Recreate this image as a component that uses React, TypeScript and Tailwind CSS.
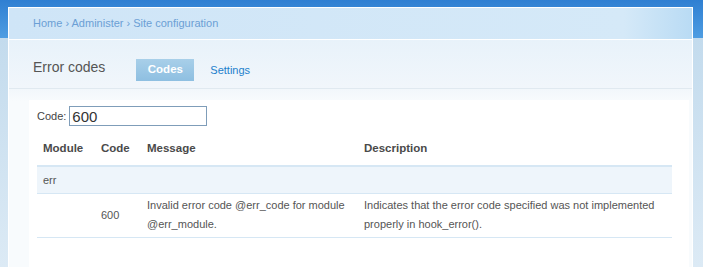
const rows = [
  {
    module: '',
    code: '600',
    message: 'Invalid error code @err_code for module @err_module.',
    description: 'Indicates that the error code specified was not implemented properly in hook_error().',
  },
]

export default function App() {
  return (
    <div className="h-[267px] w-[703px] overflow-hidden bg-[linear-gradient(to_bottom,#2f7fd2_0px,#4e9de2_38px,#c3dbed_38px,#dceaf5_267px)] pl-[8px] pr-[10px] pt-[7px] font-['Liberation_Sans',Arial,sans-serif]">
      <div className="flex h-[260px] flex-col border-l border-r border-t border-white bg-white">
        <div className="flex h-[31px] items-center bg-[linear-gradient(to_right,#cfe5f7_0%,#d5e9f8_90%,#b9dbf4_100%)] pl-[24px] text-[11px] text-[#6b9fd5]">
          Home › Administer › Site configuration
        </div>
        <div className="flex h-[50px] items-end border-b border-t border-b-[#e0e9f0] border-t-white bg-[linear-gradient(to_bottom,#e8f2fa,#f1f6fb)] pb-[7px] pl-[24px]">
          <h1 className="mb-[6px] text-[14px] leading-[16px] text-[#555]">Error codes</h1>
          <span className="ml-[31px] flex h-[22px] w-[58px] items-center justify-center bg-[linear-gradient(to_bottom,#a8cfe9,#8ebfe1)] text-[11.5px] font-bold text-white">
            Codes
          </span>
          <a className="mb-[4px] ml-[16px] text-[11px] leading-[14px] text-[#1c7fcc]">Settings</a>
        </div>
        <div className="flex flex-1 flex-col bg-[linear-gradient(to_bottom,#f2f7fb_0px,#f8fbfd_12px)] pl-[20px] pr-[3px] pt-[11px]">
          <div className="flex-1 bg-white pl-[8px] pt-[6px]">
            <div className="flex items-center">
              <label className="mr-[3px] text-[11px] text-[#444]">Code:</label>
              <input
                defaultValue="600"
                className="h-[20px] w-[138px] border border-[#7f9db9] px-[2px] text-[15px] leading-[18px] text-[#333] outline-none"
              />
            </div>
            <table className="mt-[7px] w-[635px] table-fixed border-collapse text-left text-[11px] text-[#555]">
              <colgroup>
                <col className="w-[58px]" />
                <col className="w-[46px]" />
                <col className="w-[217px]" />
                <col />
              </colgroup>
              <thead>
                <tr className="h-[33px] border-b-2 border-[#d6e7f4] text-[11.5px] font-bold text-[#4a4a4a]">
                  <th className="px-[6px] font-bold">Module</th>
                  <th className="px-[6px] font-bold">Code</th>
                  <th className="px-[6px] font-bold">Message</th>
                  <th className="px-[6px] font-bold">Description</th>
                </tr>
              </thead>
              <tbody>
                <tr className="h-[27px] border-b border-[#d6e7f4] bg-[#eef5fb]">
                  <td className="px-[6px] text-[#555]" colSpan={4}>err</td>
                </tr>
                {rows.map((r) => (
                  <tr key={r.code} className="h-[44px] border-b border-[#d6e7f4] leading-[19px] text-[#555]">
                    <td className="px-[6px]">{r.module}</td>
                    <td className="px-[6px] text-[#555]">{r.code}</td>
                    <td className="px-[6px]">{r.message}</td>
                    <td className="px-[6px]">{r.description}</td>
                  </tr>
                ))}
              </tbody>
            </table>
          </div>
        </div>
      </div>
    </div>
  )
}
